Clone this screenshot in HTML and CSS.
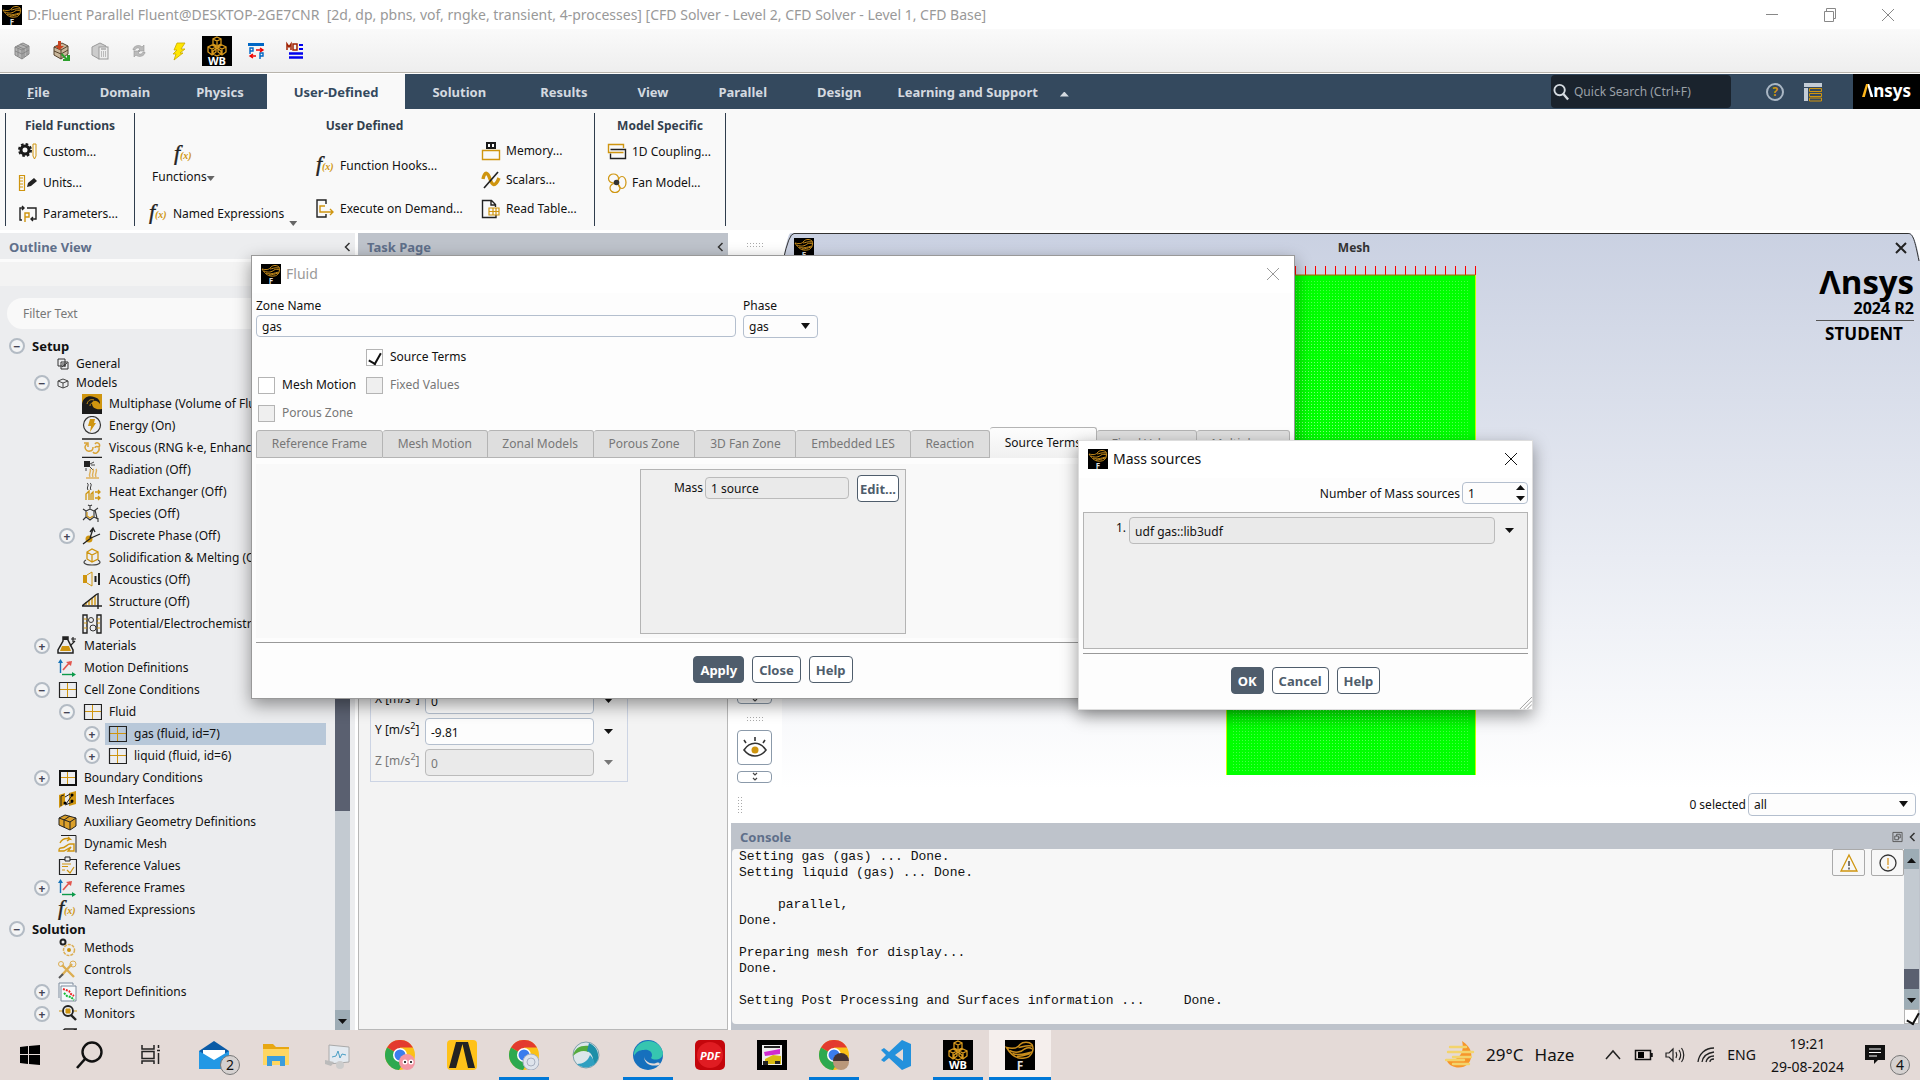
FILE: index.html
```html
<!DOCTYPE html>
<html lang="en">
<head>
  <meta charset="UTF-8">
  <meta name="viewport" content="width=device-width, initial-scale=1.0">
  <title>Fluent Parallel</title>
  <link rel="stylesheet" href="styles.css">
</head>
<body>
  <!-- Icon sprite -->
  <svg class="sprite" aria-hidden="true">
    <symbol id="fluent" viewBox="0 0 20 20">
      <rect width="20" height="20" fill="#000"/>
      <g fill="none" stroke="#c98d1b" stroke-width="1">
        <path d="M1 5c4 1 7 1 9-2 2-2 6-2 8 0 2 4-1 9-5 9-5 1-9-2-12-7z"/>
        <path d="M3 7c4 2 8 1 10-1 2-1 4-1 5 0M5 9c4 2 8 0 13-1M8 11c3 0 6-1 9-2M9 5c2 0 5-2 9-1"/>
      </g>
      <text x="10" y="20" text-anchor="middle" class="mark">F</text>
    </symbol>
    <symbol id="wb" viewBox="0 0 30 30">
      <rect width="30" height="30" fill="#000"/>
      <g fill="none" stroke="#d99a1c" stroke-width="1.3">
        <path d="M15 1l4 2v5l-4 2-4-2V3zM10 9l4 2v5l-4 3-4-3v-5zM20 9l4 2v5l-4 3-4-3v-5zM15 12l4 3v3l-4 2-4-2v-3zM11 3l4 2 4-2M6 11l4 2 4-2M16 11l4 2 4-2M15 5v4M10 13v5M20 13v5"/>
      </g>
      <text x="15" y="29" text-anchor="middle" class="mark mark-wb">WB</text>
    </symbol>
    <symbol id="cube" viewBox="0 0 20 20">
      <path d="M3 6l8-4 6 3v8l-7 5-7-4z" fill="#b4b4b4" stroke="#888"/>
      <path d="M3 6l7 3 7-4M10 9v9M5 5l7 3v8M8 3l7 3v8M3 10l7 3 7-4M6 7v8" fill="none" stroke="#888"/>
    </symbol>
    <symbol id="cube-in" viewBox="0 0 20 20">
      <path d="M3 6l8-4 6 3v8l-7 5-7-4z" fill="#c9b79b" stroke="#54422d"/>
      <path d="M3 6l7 3 7-4M10 9v9M3 10l7 3 7-4" fill="none" stroke="#54422d"/>
      <path d="M7 0v5H4l4.500 4L13 5h-3V0z" fill="#c8431f"/>
      <path d="M11 12l5 5v-3h3v6h-7v-2h2l-4-4z" fill="#2ca02c"/>
    </symbol>
    <symbol id="cube-calc" viewBox="0 0 20 20">
      <path d="M2 6l8-4 6 3v8l-7 5-7-4z" fill="#ccc" stroke="#999"/>
      <rect x="9" y="6" width="9" height="12" fill="#eee" stroke="#999"/>
      <path d="M11 8h5M11 11h1m1 0h1m1 0h1M11 13h1m1 0h1m1 0h1M11 15h1m1 0h1m1 0h1" stroke="#888"/>
    </symbol>
    <symbol id="sync" viewBox="0 0 20 20">
      <path d="M4 9c0-4 6-6 9-3l2-2v6H9l2-2c-2-2-4-1-5 1zM16 11c0 4-6 6-9 3l-2 2v-6h6l-2 2c2 2 4 1 5-1z" fill="#bbb" stroke="#999" stroke-width=".6"/>
    </symbol>
    <symbol id="bolt" viewBox="0 0 20 20">
      <path d="M9 2h8l-4 6h4l-5 4h3l-9 7 2-6H5l4-4H6z" fill="#ffe600" stroke="#c8a800" stroke-width=".8"/>
    </symbol>
    <symbol id="pp" viewBox="0 0 20 20">
      <path d="M2 2h16v3H2z" fill="#0067c5"/>
      <path d="M4 13V7h3v3H4M14 18v-6h3v3h-3" fill="none" stroke="#0067c5" stroke-width="1.400"/>
      <path d="M10 9h7m-3-2l3 2-3 2M10 15H4m3-2l-3 2 3 2" fill="none" stroke="#e00" stroke-width="1.400"/>
    </symbol>
    <symbol id="mo" viewBox="0 0 20 20">
      <path d="M2 9V3l2 3 2-3v6M8 3h4v6H8z" fill="none" stroke="#a02000" stroke-width="1.500"/>
      <path d="M14 4h4M14 8h4" stroke="#00e" stroke-width="2"/>
      <path d="M4 12.500h14M4 16.500h14" stroke="#00e" stroke-width="2.400"/>
    </symbol>
    <symbol id="custom" viewBox="0 0 20 20">
      <circle cx="7" cy="8" r="4" fill="none" stroke="#1a1a1a" stroke-width="3"/>
      <circle cx="7" cy="8" r="6" fill="none" stroke="#1a1a1a" stroke-width="2" stroke-dasharray="2.600 2.100"/>
      <path d="M15 2h3v12l-1.500 3-1.500-3z" fill="none" stroke="#cf950f"/>
    </symbol>
    <symbol id="units" viewBox="0 0 20 20">
      <path d="M1.500 2.500h5v15h-5zM2 5h3M2 8h3M2 11h3M2 14h3" fill="none" stroke="#cf950f" stroke-width="1.200"/>
      <path d="M9 14l1-4 6-5 3 3-6 5z" fill="#222"/>
    </symbol>
    <symbol id="params" viewBox="0 0 20 20">
      <path d="M6 4H2v12h2M9 4h9v11h-5M4 2l2 2-2 2M15 13l-2 2 2 2" fill="none" stroke="#222" stroke-width="1.400"/>
      <path d="M7 18V9h4v4H7" fill="none" stroke="#cf950f" stroke-width="1.400"/>
    </symbol>
    <symbol id="fx" viewBox="0 0 20 20">
      <text x="1" y="15" class="fx-f">f</text>
      <text x="7" y="14" class="fx-x">(x)</text>
    </symbol>
    <symbol id="exec" viewBox="0 0 20 20">
      <path d="M11 5V1H2v17h9v-3" fill="none" stroke="#222" stroke-width="1.400"/>
      <path d="M10 7H5v6h13m-3-3l3 3-3 3" fill="none" stroke="#cf950f" stroke-width="1.400"/>
    </symbol>
    <symbol id="memory" viewBox="0 0 20 20">
      <path d="M5 1h10v7H5z" fill="#1a1a1a"/><path d="M7 3h2v3H7zM11 3h2v3h-2z" fill="#fff"/>
      <path d="M1.500 9.500h17v9h-17z" fill="none" stroke="#cf950f" stroke-width="1.400"/>
    </symbol>
    <symbol id="scalars" viewBox="0 0 20 20">
      <path d="M2 9c2-9 5-6 7 0s5 9 9-1" fill="none" stroke="#cf950f" stroke-width="3.400"/>
      <path d="M17 2L3 18" stroke="#222" stroke-width="1.600"/>
    </symbol>
    <symbol id="table" viewBox="0 0 20 20">
      <path d="M15 16v2.500H1.500v-17h9l4 4V8M10 2v4h4" fill="none" stroke="#222" stroke-width="1.400"/>
      <path d="M8 9h10v7H8zM8 12.500h10M12 9v7M15 9v7" fill="#f9f9f9" stroke="#cf950f" stroke-width="1.200"/>
    </symbol>
    <symbol id="coupling" viewBox="0 0 20 20">
      <path d="M3.500 7.500h15v9h-15v-5" fill="none" stroke="#222" stroke-width="1.400"/>
      <path d="M16.500 6V2.500h-15v8h15" fill="none" stroke="#cf950f" stroke-width="1.400"/>
    </symbol>
    <symbol id="fan" viewBox="0 0 20 20">
      <g fill="none" stroke="#cf950f" stroke-width="1.200"><ellipse cx="6.500" cy="5.500" rx="5" ry="4.500"/><ellipse cx="15" cy="9.500" rx="4" ry="6"/><ellipse cx="8" cy="15" rx="5" ry="4.500"/></g>
      <circle cx="9.500" cy="9.500" r="2.800" fill="#333"/>
    </symbol>
    <symbol id="general" viewBox="0 0 12 12">
      <path d="M1 1h7v7H1zM4 4h7v7H4zM5 9l5-4M5 6h3v3" fill="none" stroke="#333"/>
    </symbol>
    <symbol id="models" viewBox="0 0 12 12">
      <path d="M1 4l5-2 5 2v5l-5 2-5-2zM1 4l5 2 5-2M6 6v5" fill="none" stroke="#444"/>
    </symbol>
    <symbol id="multiphase" viewBox="0 0 20 20">
      <rect width="20" height="20" fill="#cf950f"/>
      <path d="M0 20V10C1 3 7 1 12 3c4 1 6 3 6 7-3-4-7-4-8-1 0 5 4 7 10 6v5z" fill="#1a1a1a"/>
      <path d="M5 10c1-4 4-5 7-4M8 12c0-2 1-3 3-3" fill="none" stroke="#cf950f"/>
    </symbol>
    <symbol id="energy" viewBox="0 0 20 20">
      <circle cx="10" cy="9" r="8.500" fill="none" stroke="#333" stroke-width="1.200"/>
      <path d="M8 3h5l-1 4h2l-6 9 1-6H6z" fill="#cf950f"/>
    </symbol>
    <symbol id="viscous" viewBox="0 0 20 20">
      <path d="M0 1h20M0 19.500h20" stroke="#222" stroke-width="1.400"/>
      <path d="M5 6c-4 3-1 8 3 7 2 0 3-2 3-4M2 5h4v4M13 6c2-3 6 0 4 3-3-1-4 0-4 1m4 0c1 4-4 7-6 4" fill="none" stroke="#d9a336" stroke-width="1.500"/>
    </symbol>
    <symbol id="radiation" viewBox="0 0 20 20">
      <path d="M2 1h6v6H2z" fill="#222"/><path d="M8 4l4-2M8 7l3 3M4 8v3M9 5h4" stroke="#444"/>
      <path d="M8 9c2 3-2 4 0 8M11 9c2 3-2 4 0 8M14 9c2 3-2 4 0 8M4 18h13" fill="none" stroke="#dfb15c" stroke-width="1.500"/>
    </symbol>
    <symbol id="heat" viewBox="0 0 20 20">
      <path d="M5 1c3 2-1 4 1 7M8 1c3 2-1 4 1 7" fill="none" stroke="#333"/>
      <path d="M4 18v-6l3-3v9M9 18v-6l2-2v8M13 10h5m-2-2l2 2-2 2M13 16h5m-2-2l2 2-2 2" fill="none" stroke="#cf950f" stroke-width="1.300"/>
    </symbol>
    <symbol id="species" viewBox="0 0 20 20">
      <path d="M4 7l4-2 4 2v6l-4 3-4-3zM8 5V2M6 1l2 1 2-1M4 7L1 5M12 7l4-3M4 13l-3 3M12 13l4 2M16 14v4M13 6l2 8" fill="none" stroke="#333" stroke-width="1.100"/>
      <path d="M5 8v4l3 2 3-2" fill="none" stroke="#cf950f" stroke-width="1.200"/>
    </symbol>
    <symbol id="discrete" viewBox="0 0 20 20">
      <circle cx="7" cy="13" r="3.500" fill="#cf950f"/>
      <path d="M1 18l8-6 9-4M8 12l3-9M8 6l3-4 2 4" fill="none" stroke="#222" stroke-width="1.300"/>
    </symbol>
    <symbol id="solid" viewBox="0 0 20 20">
      <path d="M5 4l5-3 6 3v7l-6 3-5-3zM5 4l5 3 6-3M10 7v7" fill="none" stroke="#cf950f" stroke-width="1.300"/>
      <path d="M4 12c-4 2-2 5 6 5s10-3 6-5" fill="none" stroke="#444" stroke-width="1.200"/>
    </symbol>
    <symbol id="acoustics" viewBox="0 0 20 20">
      <path d="M1 5h4v8H1z" fill="#cf950f"/><path d="M5 5l5-3v14l-5-3" fill="none" stroke="#cf950f"/>
      <path d="M13.500 6v6M17 3v12" stroke="#222" stroke-width="2"/>
    </symbol>
    <symbol id="structure" viewBox="0 0 20 20">
      <path d="M4 13v-3M7 13V8M10 13V6M13 13V3" stroke="#cf950f" stroke-width="1.400"/>
      <path d="M0 14h20M0 14L15 2M16 1v16" fill="none" stroke="#222" stroke-width="1.400"/>
    </symbol>
    <symbol id="potential" viewBox="0 0 20 20">
      <path d="M1 1h4v18H1zM15 1h4v18h-4z" fill="none" stroke="#222" stroke-width="1.400"/>
      <path d="M2 5h3M2 9h3M2 14h3M15 5h3M15 9h3M15 14h3" stroke="#cf950f"/>
      <circle cx="9" cy="6" r="2.500" fill="none" stroke="#333"/><circle cx="11" cy="14" r="3" fill="none" stroke="#333"/>
    </symbol>
    <symbol id="materials" viewBox="0 0 20 20">
      <path d="M6 1h5v3l5 10v3H1v-3L6 5z" fill="none" stroke="#222" stroke-width="1.500"/>
      <path d="M5 10h7l2 5H3z" fill="#cf950f"/><path d="M6 1h5v3H6z" fill="#222"/>
      <path d="M13 10l5-5M16 1v5M14 3h5" stroke="#222" stroke-width="1.200"/>
    </symbol>
    <symbol id="axes" viewBox="0 0 20 20">
      <path d="M3.500 15V3" stroke="#1473b8" stroke-width="1.400"/><path d="M1 5l2.500-4L6 5z" fill="#1473b8"/>
      <path d="M6 12l7-8" stroke="#e2554d" stroke-width="1.600"/><path d="M9 4l6-1-1 5z" fill="#e2554d"/>
      <path d="M5 16.500h11" stroke="#0c9a4a" stroke-width="1.400"/><path d="M15 14l4 2.500-4 2.500z" fill="#0c9a4a"/>
    </symbol>
    <symbol id="zone" viewBox="0 0 20 20">
      <path d="M10.500 2v15M2 9.500h17" stroke="#cf950f"/>
      <path d="M2.500 2.500h17v15h-17z" fill="none" stroke="#222" stroke-width="1.200"/>
    </symbol>
    <symbol id="boundary" viewBox="0 0 20 20">
      <path d="M10.500 2v15M2 9.500h17" stroke="#cf950f"/>
      <path d="M3 3h16v14H3z" fill="none" stroke="#111" stroke-width="2"/>
    </symbol>
    <symbol id="interfaces" viewBox="0 0 20 20">
      <path d="M2 5l6-2v11l-6 4zM12 3l7-2v13l-7 2z" fill="#cf950f"/>
      <path d="M4 16V6l3-1M9 14l7-10M8 7l5-3M8 15l8-3" stroke="#222" fill="none"/>
      <circle cx="15" cy="5" r="1.500"/><circle cx="15" cy="11" r="1.500"/><circle cx="8" cy="13" r="1.500"/>
    </symbol>
    <symbol id="aux" viewBox="0 0 20 20">
      <path d="M2 6l6-3 11 3v8l-6 4-11-5z" fill="#dba02a" stroke="#222"/>
      <path d="M2 6l11 4 6-4M13 10v8M7 8l6-4M7 8v7" fill="none" stroke="#222"/>
    </symbol>
    <symbol id="dynamic" viewBox="0 0 20 20">
      <path d="M4 1.500h15v17" fill="none" stroke="#222"/>
      <path d="M3 9c2-4 6-5 10-4l-2-2m2 2l-3 2M2 17c0-2 0-3 2-3 5 0 6-4 9-4h4v7h-6l3-4-7 4z" fill="none" stroke="#cf950f" stroke-width="1.400"/>
    </symbol>
    <symbol id="values" viewBox="0 0 20 20">
      <path d="M2.500 3.500h17v15h-17z" fill="none" stroke="#222" stroke-width="1.200"/><path d="M8 1h5v4H8z" fill="#ecedef" stroke="#222"/>
      <path d="M5 8h9M5 10.500h6M5 14h3M10 14l3 3 4-6" fill="none" stroke="#cf950f" stroke-width="1.200"/>
    </symbol>
    <symbol id="methods" viewBox="0 0 20 20">
      <circle cx="6" cy="4" r="2.500" fill="none" stroke="#222" stroke-width="2"/>
      <circle cx="12" cy="12" r="5.500" fill="none" stroke="#dcae53" stroke-width="1.500" stroke-dasharray="3 1"/><circle cx="12" cy="12" r="2" fill="#cf950f"/>
    </symbol>
    <symbol id="controls" viewBox="0 0 20 20">
      <path d="M5 5l12 12M15 4L5 15" stroke="#dcae53" stroke-width="2.400"/>
      <circle cx="4" cy="4" r="2.500" fill="none" stroke="#dcae53"/><circle cx="16" cy="4" r="3" fill="none" stroke="#dcae53"/><path d="M2 18l4-4" stroke="#555" stroke-width="2"/>
    </symbol>
    <symbol id="report" viewBox="0 0 20 20">
      <path d="M2 16V1h14v2M4 4h15v15H4z" fill="#f5f8fb" stroke="#7d8b9c"/>
      <path d="M6 7l3 1 3 1 2 3 3 2" fill="none" stroke="#e22" stroke-width="2" stroke-dasharray="2 1"/>
      <path d="M7 11l3 3 4 1 3 3" fill="none" stroke="#1b3" stroke-width="2" stroke-dasharray="2 1"/>
    </symbol>
    <symbol id="monitors" viewBox="0 0 20 20">
      <circle cx="11" cy="7" r="5" fill="none" stroke="#222" stroke-width="1.800"/><path d="M14 11l5 5" stroke="#222" stroke-width="2.400"/>
      <path d="M2 7h3M17 7h3M9 5h4v4H9z" fill="#cf950f" stroke="#cf950f"/>
    </symbol>
    <symbol id="box3d" viewBox="0 0 20 20">
      <path d="M3 7l5-4h11l-5 4zM3 7v10h11V7M14 17l5-4V3" fill="#ecedef" stroke="#222" stroke-width="1.500"/>
    </symbol>
    <symbol id="close" viewBox="0 0 14 14"><path d="M1 1l12 12M13 1L1 13" stroke="currentColor" fill="none"/></symbol>
    <symbol id="back" viewBox="0 0 8 12"><path d="M6 2L2 6l4 4" stroke="#333" stroke-width="1.500" fill="none"/></symbol>
    <symbol id="chev2" viewBox="0 0 10 10"><path d="M3 1l2 2 2-2M3 6l2 2 2-2" stroke="#444" stroke-width="1.200" fill="none"/></symbol>
    <symbol id="chrome" viewBox="0 0 30 30">
      <circle cx="15" cy="15" r="15" fill="#fbc116"/>
      <path d="M15 15L2 7.500A15 15 0 0 1 28 7.500H15z" fill="#e33b2e"/>
      <path d="M15 15L2 7.500A15 15 0 0 0 14 30l7-12z" fill="#2da94f"/>
      <circle cx="15" cy="15" r="7" fill="#fff"/><circle cx="15" cy="15" r="5.500" fill="#3b7ded"/>
    </symbol>
  </svg>

  <header class="titlebar">
    <svg class="app-icon"><use href="#fluent"/></svg>
    <h1 class="window-title">D:Fluent Parallel Fluent@DESKTOP-2GE7CNR&nbsp; [2d, dp, pbns, vof, rngke, transient, 4-processes] [CFD Solver - Level 2, CFD Solver - Level 1, CFD Base]</h1>
    <div class="window-buttons">
      <button aria-label="Minimize"><svg viewBox="0 0 14 14"><path d="M1 6.500h12" stroke="#888"/></svg></button>
      <button aria-label="Restore"><svg viewBox="0 0 14 14"><path d="M1.500 3.500h9v10h-9zM3.500 3V.500h9v10H11" fill="none" stroke="#888"/></svg></button>
      <button aria-label="Close"><svg><use href="#close"/></svg></button>
    </div>
  </header>

  <div class="toolbar">
    <button aria-label="Mesh"><svg><use href="#cube"/></svg></button>
    <button aria-label="Import mesh"><svg><use href="#cube-in"/></svg></button>
    <button aria-label="Setup"><svg><use href="#cube-calc"/></svg></button>
    <button aria-label="Refresh"><svg><use href="#sync"/></svg></button>
    <button aria-label="Update"><svg><use href="#bolt"/></svg></button>
    <button class="wide" aria-label="Workbench"><svg><use href="#wb"/></svg></button>
    <button aria-label="Parameters"><svg><use href="#pp"/></svg></button>
    <button aria-label="Monitor"><svg><use href="#mo"/></svg></button>
  </div>

  <nav class="menubar">
    <a href="#"><u>F</u>ile</a>
    <a href="#" class="narrow">Domain</a>
    <a href="#" class="narrow">Physics</a>
    <a href="#" class="active">User-Defined</a>
    <a href="#">Solution</a>
    <a href="#">Results</a>
    <a href="#" class="narrow">View</a>
    <a href="#">Parallel</a>
    <a href="#" class="narrow">Design</a>
    <a href="#" class="learn">Learning and Support</a>
    <button class="collapse" aria-label="Collapse ribbon"><i class="caret up"></i></button>
    <label class="search">
      <svg viewBox="0 0 18 18"><circle cx="7" cy="7" r="5.500" fill="none" stroke="#d5dbe1" stroke-width="2"/><path d="M11 11l5 6" stroke="#d5dbe1" stroke-width="2.500"/></svg>
      <input type="text" placeholder="Quick Search (Ctrl+F)" aria-label="Quick Search">
    </label>
    <button class="nav-icon help" aria-label="Help">?</button>
    <button class="nav-icon" aria-label="Arrange layout"><svg viewBox="0 0 18 20"><path d="M0 1h18v4H0zM0 6h4v13H0z" fill="#c3ccd6"/><path d="M5.500 6.500h12v3h-12zM5.500 11.500h12v3h-12zM5.500 16h12v3h-12z" fill="none" stroke="#cf950f"/></svg></button>
    <div class="brand"><span class="brand-a">Λ</span>nsys</div>
  </nav>

  <section class="ribbon">
    <div class="group g-field">
      <h2>Field Functions</h2>
      <div class="col loose">
        <button><svg><use href="#custom"/></svg>Custom...</button>
        <button><svg><use href="#units"/></svg>Units...</button>
        <button><svg><use href="#params"/></svg>Parameters...</button>
      </div>
    </div>
    <div class="group g-user">
      <h2>User Defined</h2>
      <div class="cols">
        <div class="col first">
          <button class="stacked"><svg><use href="#fx"/></svg><span>Functions<i class="caret"></i></span></button>
          <button><svg><use href="#fx"/></svg>Named Expressions<i class="caret low"></i></button>
        </div>
        <div class="col second">
          <button><svg><use href="#fx"/></svg>Function Hooks...</button>
          <button><svg><use href="#exec"/></svg>Execute on Demand...</button>
        </div>
        <div class="col">
          <button><svg><use href="#memory"/></svg>Memory...</button>
          <button><svg><use href="#scalars"/></svg>Scalars...</button>
          <button><svg><use href="#table"/></svg>Read Table...</button>
        </div>
      </div>
    </div>
    <div class="group g-model">
      <h2>Model Specific</h2>
      <div class="col loose">
        <button><svg><use href="#coupling"/></svg>1D Coupling...</button>
        <button><svg><use href="#fan"/></svg>Fan Model...</button>
      </div>
    </div>
  </section>

  <main class="workspace">
    <aside class="outline">
      <header class="panel-head light"><h2>Outline View</h2><button aria-label="Collapse"><svg><use href="#back"/></svg></button></header>
      <div class="outline-tools"></div>
      <div class="outline-body">
        <div class="tree-wrap">
          <input class="filter" type="text" placeholder="Filter Text" aria-label="Filter Text">
          <ul class="tree">
            <li class="root"><button class="exp">−</button><span class="item">Setup</span></li>
            <li class="l1 small first"><span class="item"><svg><use href="#general"/></svg>General</span></li>
            <li class="l1 small"><button class="exp">−</button><span class="item"><svg><use href="#models"/></svg>Models</span></li>
            <li class="l2"><span class="item"><svg><use href="#multiphase"/></svg>Multiphase (Volume of Fluid)</span></li>
            <li class="l2"><span class="item"><svg><use href="#energy"/></svg>Energy (On)</span></li>
            <li class="l2"><span class="item"><svg><use href="#viscous"/></svg>Viscous (RNG k-e, Enhanced Wall Fn)</span></li>
            <li class="l2"><span class="item"><svg><use href="#radiation"/></svg>Radiation (Off)</span></li>
            <li class="l2"><span class="item"><svg><use href="#heat"/></svg>Heat Exchanger (Off)</span></li>
            <li class="l2"><span class="item"><svg><use href="#species"/></svg>Species (Off)</span></li>
            <li class="l2"><button class="exp">+</button><span class="item"><svg><use href="#discrete"/></svg>Discrete Phase (Off)</span></li>
            <li class="l2"><span class="item"><svg><use href="#solid"/></svg>Solidification &amp; Melting (Off)</span></li>
            <li class="l2"><span class="item"><svg><use href="#acoustics"/></svg>Acoustics (Off)</span></li>
            <li class="l2"><span class="item"><svg><use href="#structure"/></svg>Structure (Off)</span></li>
            <li class="l2"><span class="item"><svg><use href="#potential"/></svg>Potential/Electrochemistry (Off)</span></li>
            <li class="l1"><button class="exp">+</button><span class="item"><svg><use href="#materials"/></svg>Materials</span></li>
            <li class="l1"><span class="item"><svg><use href="#axes"/></svg>Motion Definitions</span></li>
            <li class="l1"><button class="exp">−</button><span class="item"><svg><use href="#zone"/></svg>Cell Zone Conditions</span></li>
            <li class="l2"><button class="exp">−</button><span class="item"><svg><use href="#zone"/></svg>Fluid</span></li>
            <li class="l3"><button class="exp">+</button><span class="item selected"><svg><use href="#zone"/></svg>gas (fluid, id=7)</span></li>
            <li class="l3"><button class="exp">+</button><span class="item"><svg><use href="#zone"/></svg>liquid (fluid, id=6)</span></li>
            <li class="l1"><button class="exp">+</button><span class="item"><svg><use href="#boundary"/></svg>Boundary Conditions</span></li>
            <li class="l1"><span class="item"><svg><use href="#interfaces"/></svg>Mesh Interfaces</span></li>
            <li class="l1"><span class="item"><svg><use href="#aux"/></svg>Auxiliary Geometry Definitions</span></li>
            <li class="l1"><span class="item"><svg><use href="#dynamic"/></svg>Dynamic Mesh</span></li>
            <li class="l1"><span class="item"><svg><use href="#values"/></svg>Reference Values</span></li>
            <li class="l1"><button class="exp">+</button><span class="item"><svg><use href="#axes"/></svg>Reference Frames</span></li>
            <li class="l1"><span class="item"><svg><use href="#fx"/></svg>Named Expressions</span></li>
            <li class="root second"><button class="exp">−</button><span class="item">Solution</span></li>
            <li class="l1"><span class="item"><svg><use href="#methods"/></svg>Methods</span></li>
            <li class="l1"><span class="item"><svg><use href="#controls"/></svg>Controls</span></li>
            <li class="l1"><button class="exp">+</button><span class="item"><svg><use href="#report"/></svg>Report Definitions</span></li>
            <li class="l1"><button class="exp">+</button><span class="item"><svg><use href="#monitors"/></svg>Monitors</span></li>
            <li class="l1"><span class="item"><svg><use href="#box3d"/></svg></span></li>
          </ul>
        </div>
        <div class="scrollbar">
          <div class="thumb outline-thumb"></div>
          <button class="end" aria-label="Scroll down"><i class="caret"></i></button>
        </div>
      </div>
    </aside>

    <section class="task">
      <header class="panel-head"><h2>Task Page</h2><button aria-label="Collapse"><svg><use href="#back"/></svg></button></header>
      <div class="task-body">
        <div class="gravity">
          <div class="field"><label for="gx">X [m/s<sup>2</sup>]</label><input id="gx" type="text" value="0"><i class="caret"></i></div>
          <div class="field"><label for="gy">Y [m/s<sup>2</sup>]</label><input id="gy" type="text" value="-9.81"><i class="caret"></i></div>
          <div class="field off"><label for="gz">Z [m/s<sup>2</sup>]</label><input id="gz" type="text" value="0" disabled><i class="caret"></i></div>
        </div>
      </div>
    </section>

    <section class="right">
      <div class="graphics">
        <div class="side-tools">
          <div class="side-group"><i class="grip"></i><button class="tool" aria-label="Pointer"></button></div>
          <div class="side-group">
            <button class="more" aria-label="More"><svg><use href="#chev2"/></svg></button>
            <i class="grip"></i>
            <button class="tool" aria-label="Visibility">
              <svg viewBox="0 0 26 26"><path d="M2 15c6-9 16-9 22 0-6 8-16 8-22 0z" fill="none" stroke="#333" stroke-width="1.600"/><circle cx="13" cy="15" r="3.500" fill="#cf950f"/><path d="M2 5l2 3M13 2v4M23 5l-2 3" stroke="#333" stroke-width="1.600"/></svg>
            </button>
            <button class="more" aria-label="More"><svg><use href="#chev2"/></svg></button>
          </div>
        </div>
        <div class="viewport">
          <div class="view-tab">
            <svg class="edge" viewBox="0 0 12 28"><path d="M0 0h9c-2 0-3 3-8 26v2H0z" fill="#fff"/><path d="M1 28Q7 0 12 .500" fill="none" stroke="#333"/></svg>
            <div class="view-bar">
              <svg class="app-icon"><use href="#fluent"/></svg>
              <h2>Mesh</h2>
              <button aria-label="Close tab"><svg viewBox="0 0 14 14"><path d="M2 2l10 10M12 2L2 12" stroke="#222" stroke-width="2"/></svg></button>
            </div>
            <svg class="edge" viewBox="0 0 12 28"><path d="M0 0h12v28C8 6 5 0 0 0z" fill="#fff"/><path d="M0 .500C5 0 7 8 11 28" fill="none" stroke="#333"/></svg>
          </div>
          <svg class="mesh" viewBox="0 0 250 510">
            <defs>
              <pattern id="fine" width="3" height="3" patternUnits="userSpaceOnUse"><path d="M1 1h1v1H1z" fill="#8cff8c"/></pattern>
              <pattern id="ticks" x="9" width="10" height="9" patternUnits="userSpaceOnUse"><path d="M.500 0v9" stroke="#f00"/></pattern>
              <radialGradient id="fade"><stop offset="0" stop-color="#fff"/><stop offset=".7" stop-color="#aaa"/><stop offset="1" stop-color="#000"/></radialGradient>
              <mask id="patch">
                <rect width="250" height="510" fill="url(#fade)"/>
                <g fill="none" stroke="#000" stroke-width="7">
                  <path d="M20 62C90 30 180 50 236 110M20 100C90 78 170 90 230 150M60 30C130 20 190 30 240 70M10 490C80 440 180 470 240 490"/>
                </g>
              </mask>
            </defs>
            <rect y="1" width="250" height="9" fill="url(#ticks)"/>
            <rect y="10" width="250" height="500" fill="#0f0"/>
            <rect x="6" y="14" width="238" height="492" fill="url(#fine)"/>
            <rect x="6" y="14" width="238" height="492" fill="#0f0" opacity=".5"/>
            <rect x="6" y="14" width="238" height="492" fill="url(#fine)" mask="url(#patch)"/>
            <path d="M0 10h250" stroke="#b06000" stroke-width="1"/>
            <path d="M.500 10v500M249.500 10v500" stroke="#c8ff00"/>
          </svg>
          <div class="student-logo">
            <strong>Λnsys</strong>
            <b>2024 R2</b>
            <em>STUDENT</em>
          </div>
        </div>
      </div>
      <div class="select-bar">
        <i class="grip tall"></i>
        <label for="surfaces">0 selected</label>
        <div class="select all"><select id="surfaces"><option>all</option></select></div>
      </div>
      <section class="console">
        <header class="panel-head">
          <h2>Console</h2>
          <button aria-label="Float"><svg viewBox="0 0 12 12"><path d="M1 1h10v10H1zM3 5h4v4H3zM5 5V3h4v4H7" fill="none" stroke="#555"/></svg></button>
          <button aria-label="Collapse"><svg><use href="#back"/></svg></button>
        </header>
        <div class="console-body">
          <pre>Setting gas (gas) ... Done.
Setting liquid (gas) ... Done.

     parallel,
Done.

Preparing mesh for display...
Done.

Setting Post Processing and Surfaces information ...     Done.</pre>
          <div class="console-buttons">
            <button aria-label="Warnings"><svg viewBox="0 0 20 20"><path d="M10 2l8 16H2z" fill="none" stroke="#cf950f" stroke-width="1.300"/><path d="M10 8v5M10 14.500v2" stroke="#777" stroke-width="2"/></svg></button>
            <button aria-label="Errors"><svg viewBox="0 0 20 20"><circle cx="10" cy="10" r="8" fill="none" stroke="#333" stroke-width="1.300"/><path d="M10 5v7M10 13.500v2" stroke="#dfa94a" stroke-width="1.600"/></svg></button>
          </div>
          <div class="console-side">
            <div class="scrollbar">
              <button class="end" aria-label="Scroll up"><i class="caret up"></i></button>
              <div class="track"></div>
              <div class="thumb"></div>
              <button class="end" aria-label="Scroll down"><i class="caret"></i></button>
            </div>
            <input class="check" type="checkbox" checked aria-label="Auto scroll">
          </div>
        </div>
      </section>
    </section>
  </main>

  <footer class="taskbar">
    <button class="start" aria-label="Start"><svg viewBox="0 0 30 30"><path d="M5 7l8-1v8H5zM14 6l11-1v9H14zM5 15h8v9l-8-1zM14 15h11v10l-11-1z"/></svg></button>
    <button aria-label="Search"><svg viewBox="0 0 30 30"><circle cx="17" cy="12" r="9.500" fill="none" stroke="#111" stroke-width="2.400"/><path d="M10 19l-8 9" stroke="#111" stroke-width="2.600"/></svg></button>
    <button aria-label="Task view"><svg viewBox="0 0 30 30"><path d="M5 5v4h12V5M5 24v-3h12v3M5 11.500h12v7H5zM21.500 5v3M21.500 13v11M20 10.500h3" fill="none" stroke="#222" stroke-width="1.500"/></svg></button>
    <button aria-label="Mail"><svg viewBox="0 0 30 30"><path d="M0 11L15 1l15 10v18H0z" fill="#0a5ba6"/><path d="M4 10h22v8L15 24 4 18z" fill="#fff"/><path d="M0 11l15 9 15-9v18H0z" fill="#2298e5"/></svg><span class="badge">2</span></button>
    <button aria-label="Explorer"><svg viewBox="0 0 30 30"><path d="M2 4h10l3 3h13v17H2z" fill="#e8a712"/><path d="M2 9h26v16H2z" fill="#ffd661"/><path d="M6 26V16h18v10h-5v-5h-8v5z" fill="#3b9ddc"/></svg></button>
    <button aria-label="Monitor"><svg viewBox="0 0 30 30"><path d="M6 5l20 2v15L6 24z" fill="#e4eaf0" stroke="#aaa"/><path d="M9 17l4-1 2-5 2 7 2-4 4 1" fill="none" stroke="#4a9fc5"/><path d="M2 20l9 2-3 4-6-2z" fill="#bbb"/><circle cx="17" cy="25" r="4" fill="#ccc"/></svg></button>
    <button aria-label="Chrome"><svg viewBox="0 0 30 30"><use href="#chrome"/><circle cx="22" cy="22" r="8" fill="#f497a4"/><circle cx="20" cy="22" r="2.500" fill="#fff"/><circle cx="26" cy="22" r="2.500" fill="#fff"/><circle cx="20" cy="22" r="1"/><circle cx="26" cy="22" r="1"/></svg></button>
    <button aria-label="Ansys"><svg viewBox="0 0 30 30"><rect width="30" height="30" rx="4" fill="#ffc21a"/><path d="M9 2h7L9 28H2zM15 2h6l7 26h-7z" fill="#222"/></svg></button>
    <button class="open" aria-label="Chrome"><svg viewBox="0 0 30 30"><use href="#chrome"/><circle cx="22" cy="22" r="8" fill="#dfe4ec" stroke="#a8b0c0"/><circle cx="22" cy="22" r="4" fill="none" stroke="#a8b0c0"/></svg></button>
    <button aria-label="Browser"><svg viewBox="0 0 30 30"><circle cx="15" cy="15" r="13" fill="#dce6ea" stroke="#7fa0ac"/><path d="M2 16C4 7 10 5 19 6l-2 6c-4-2-10-1-15 4z" fill="#55ab3d"/><path d="M18 3c7 3 10 9 9 16-1 3-3 5-5 6 1-7-1-12-6-14z" fill="#1d8fa8"/><path d="M24 24c-6 5-13 4-18 0 6 0 11-3 13-9 3 3 4 6 5 9z" fill="#2f9fc0"/></svg></button>
    <button class="open" aria-label="Edge"><svg viewBox="0 0 30 30"><circle cx="15" cy="15" r="15" fill="#1670bd"/><path d="M1 13C4-3 27-3 30 13c0 7-9 8-12 5 3-4-1-9-7-8C6 10 3 12 1 16z" fill="#36c5b0"/><path d="M11 16c0 8 7 11 15 9 2-2 0-3-3-2-5 2-12-2-12-7z" fill="#e4dad7"/></svg></button>
    <button aria-label="PDF"><svg viewBox="0 0 30 30"><rect width="30" height="30" rx="5" fill="#c4060c"/><circle cx="15" cy="15" r="13" fill="#e01c22"/><text x="15" y="20" text-anchor="middle" class="pdf">PDF</text></svg></button>
    <button aria-label="Game"><svg viewBox="0 0 30 30"><rect width="30" height="30" fill="#000"/><rect x="5" y="5" width="20" height="20" fill="#eee"/><path d="M7 6h16v2H7z" fill="#222"/><path d="M7 12l16-3v5l-15 2z" fill="#d02ad0"/><path d="M8 19l8-4 8 1v8H8z" fill="#d8bb12"/><path d="M6 21h5v4H6zM18 21h5v3h-5z" fill="#222"/></svg></button>
    <button class="open" aria-label="Chrome"><svg viewBox="0 0 30 30"><use href="#chrome"/><circle cx="22" cy="22" r="8" fill="#b9977a"/><path d="M14 21a8 8 0 0 1 16 0z" fill="#433"/></svg></button>
    <button aria-label="Code"><svg viewBox="0 0 30 30"><path d="M21 0l9 4v22l-9 4L8 18l-5 4-3-2 5-5-5-5 3-2 5 4zM22 9l-8 6 8 6z" fill="#2391dc" fill-rule="evenodd"/></svg></button>
    <button class="open" aria-label="Workbench"><svg><use href="#wb"/></svg></button>
    <button class="open current" aria-label="Fluent"><svg><use href="#fluent"/></svg></button>
    <div class="tray">
      <svg class="weather" viewBox="0 0 30 30"><path d="M17 1c10 6 12 16 6 23-6 6-18 4-21-3 12 0 18-9 15-20z" fill="#f7962a"/><path d="M5 7h16M3 12h25M8 17h18M1 20h18M8 24h16" stroke="#f3d46c" stroke-width="2.400" stroke-linecap="round"/></svg>
      <span class="temp">29°C</span><span class="haze">Haze</span>
      <svg viewBox="0 0 20 20"><path d="M3 14l7-8 7 8" fill="none" stroke="#222" stroke-width="1.500"/></svg>
      <svg viewBox="0 0 20 20"><path d="M1.500 5.500h15v9h-15zM18 8v4" fill="none" stroke="#111" stroke-width="1.500"/><path d="M4 7h6v6H4z"/></svg>
      <svg viewBox="0 0 20 20"><path d="M1 8h3l4-4v12l-4-4H1zM11 7c1 2 1 4 0 6M14 5c2 3 2 7 0 10M16.500 3c3 4 3 10 0 14" fill="none" stroke="#222" stroke-width="1.200"/></svg>
      <svg viewBox="0 0 20 20"><path d="M2 17C3 9 9 3 18 3M6 17c1-6 5-9 12-10M10 17c1-4 4-6 8-6M14 17c0-2 2-3 4-3" fill="none" stroke="#222" stroke-width="1.300"/></svg>
      <span class="lang">ENG</span>
      <time class="clock">19:21<br>29-08-2024</time>
      <button class="notes" aria-label="Notifications"><svg viewBox="0 0 20 20"><path d="M0 0h20v15h-7l-4 4v-4H0z" fill="#111"/><path d="M4 4h12M4 7.500h12M4 11h8" stroke="#fff"/></svg><span class="badge">4</span></button>
    </div>
  </footer>

  <!-- Fluid zone dialog -->
  <div class="dialog fluid" role="dialog" aria-label="Fluid">
    <header class="dialog-title muted"><svg class="app-icon"><use href="#fluent"/></svg><h2>Fluid</h2><button aria-label="Close"><svg><use href="#close"/></svg></button></header>
    <div class="dialog-body">
      <div class="name-row">
        <div class="name"><label for="zone-name">Zone Name</label><input id="zone-name" type="text" value="gas"></div>
        <div class="phase"><label for="phase">Phase</label><div class="select"><select id="phase"><option>gas</option></select></div></div>
      </div>
      <div class="options">
        <label class="opt c2"><input class="check" type="checkbox" checked>Source Terms</label>
        <label class="opt c1"><input class="check" type="checkbox">Mesh Motion</label>
        <label class="opt c2 off"><input class="check" type="checkbox" disabled>Fixed Values</label>
        <label class="opt c1 off"><input class="check" type="checkbox" disabled>Porous Zone</label>
      </div>
      <div class="tabs">
        <button>Reference Frame</button><button>Mesh Motion</button><button>Zonal Models</button><button>Porous Zone</button><button>3D Fan Zone</button><button>Embedded LES</button><button>Reaction</button><button class="on">Source Terms</button><button>Fixed Values</button><button>Multiphase</button>
      </div>
      <div class="tab-panel">
        <div class="sources">
          <label for="mass">Mass</label>
          <input id="mass" type="text" value="1 source" readonly>
          <button class="btn">Edit...</button>
        </div>
      </div>
      <div class="actions"><button class="btn primary">Apply</button><button class="btn">Close</button><button class="btn">Help</button></div>
    </div>
  </div>

  <!-- Mass sources dialog -->
  <div class="dialog mass" role="dialog" aria-label="Mass sources">
    <header class="dialog-title"><svg class="app-icon"><use href="#fluent"/></svg><h2>Mass sources</h2><button aria-label="Close"><svg><use href="#close"/></svg></button></header>
    <div class="dialog-body">
      <div class="count">
        <label for="count">Number of Mass sources</label>
        <div class="spinner"><input id="count" type="text" value="1"><span class="arrows"><i class="caret up"></i><i class="caret"></i></span></div>
      </div>
      <div class="list">
        <label for="src1">1.</label>
        <input id="src1" type="text" value="udf gas::lib3udf" readonly>
        <i class="caret"></i>
      </div>
      <div class="actions"><button class="btn primary">OK</button><button class="btn">Cancel</button><button class="btn">Help</button></div>
    </div>
    <svg class="resize" viewBox="0 0 14 14"><path d="M1 14L14 1M5 14l9-9M9 14l5-5" stroke="#999" fill="none"/></svg>
  </div>
</body>
</html>
```

FILE: styles.css
```css
* {
  box-sizing: border-box;
}

body {
  margin: 0;
  height: 100vh;
  display: flex;
  flex-direction: column;
  overflow: hidden;
  background: #fff;
  font-family: "Noto Sans", "Open Sans", sans-serif;
  font-size: 12px;
  line-height: 16px;
  color: #111;
}

h1, h2, ul, pre {
  margin: 0;
  padding: 0;
  font-size: 12px;
}

ul {
  list-style: none;
}

button, input, select {
  font: inherit;
  color: inherit;
}

button {
  background: none;
  border: 0;
  padding: 0;
}

svg {
  display: block;
  flex: none;
}

.sprite {
  display: none;
}

.app-icon {
  width: 20px;
  height: 20px;
}

/* Text drawn inside icons */
.mark {
  font: bold 8px "Open Sans", sans-serif;
  fill: #ddd;
}

.mark-wb {
  font-size: 11px;
  fill: #fff;
}

.fx-f {
  font: italic 22px "Liberation Serif", serif;
  fill: #222;
  stroke: #222;
  stroke-width: 0.4px;
}

.fx-x {
  font: italic bold 10px "Liberation Serif", serif;
  fill: #cf950f;
}

.pdf {
  font: italic bold 11px "Open Sans", sans-serif;
  fill: #fff;
}

.caret {
  display: inline-block;
  flex: none;
  width: 9px;
  height: 5px;
  background: currentColor;
  clip-path: polygon(0 0, 100% 0, 50% 100%);
}

.caret.up {
  clip-path: polygon(0 100%, 100% 100%, 50% 0);
}

/* Title bar */
.titlebar {
  display: flex;
  align-items: center;
  height: 29px;
  padding-left: 2px;
  gap: 5px;
}

.window-title {
  flex: 1;
  font-size: 14px;
  font-weight: normal;
  color: #999;
  white-space: nowrap;
}

.window-buttons {
  display: flex;
  padding-right: 3px;
}

.window-buttons button {
  width: 58px;
  height: 28px;
  display: flex;
  align-items: center;
  justify-content: center;
  color: #888;
}

.window-buttons svg {
  width: 14px;
  height: 14px;
}

.toolbar {
  display: flex;
  align-items: center;
  gap: 19px;
  height: 44px;
  padding-left: 12px;
  background: linear-gradient(#fafafa, #eee);
  border-bottom: 1px solid #b8b4ac;
  margin-bottom: 1px;
}

.toolbar svg {
  width: 20px;
  height: 20px;
}

.toolbar .wide {
  margin: 0 -5px;
}

.toolbar .wide svg {
  width: 30px;
  height: 30px;
}

/* Menu bar */
.menubar {
  display: flex;
  align-items: center;
  height: 35px;
  flex: none;
  background: #34495e;
  color: #d4dae0;
  font-size: 13px;
  font-weight: bold;
}

.menubar a {
  height: 35px;
  line-height: 36px;
  padding: 0 27px;
  color: inherit;
  text-decoration: none;
  white-space: nowrap;
}

.menubar .narrow {
  padding: 0 23px;
}

.menubar .learn {
  padding: 0 22px 0 13px;
}

.menubar .active {
  background: #f9f9f9;
  color: #34495e;
}

.search {
  display: flex;
  align-items: center;
  gap: 4px;
  width: 180px;
  height: 33px;
  margin-left: auto;
  padding-left: 2px;
  border-radius: 4px;
  background: #1a232d;
  font-size: 12px;
}

.search svg {
  width: 17px;
  height: 18px;
}

.search input {
  flex: 1;
  min-width: 0;
  border: 0;
  padding: 0;
  background: none;
  outline: none;
  font-weight: normal;
}

.search input::placeholder {
  color: #9aa1a8;
}

.nav-icon {
  width: 18px;
  margin-left: 20px;
}

.nav-icon svg {
  width: 18px;
  height: 20px;
}

.nav-icon.help {
  height: 18px;
  margin-left: 35px;
  border: 2px solid #aab7c4;
  border-radius: 50%;
  color: #cf950f;
  font-size: 12px;
  line-height: 14px;
}

.brand {
  width: 67px;
  height: 35px;
  margin-left: 31px;
  background: #000;
  color: #fff;
  font-size: 17px;
  line-height: 34px;
  text-align: center;
}

.brand-a {
  background: linear-gradient(90deg, #ffb71b 52%, #fff 52%);
  background-clip: text;
  -webkit-background-clip: text;
  color: transparent;
}

/* Ribbon */
.ribbon {
  display: flex;
  flex: none;
  height: 121px;
  padding: 4px 0 4px 5px;
  background: #f9f9f9;
  margin-bottom: 3px;
}

.group {
  border-left: 1px solid #2f3d4d;
}

.group:last-child {
  border-right: 1px solid #2f3d4d;
}

.group h2 {
  height: 26px;
  line-height: 25px;
  text-align: center;
  color: #333f4d;
}

.g-field {
  width: 129px;
  padding-left: 12px;
}

.g-field h2,
.g-model h2 {
  margin-left: -12px;
}

.g-user {
  width: 460px;
  padding-left: 13px;
}

.g-user h2 {
  margin-left: -13px;
}

.g-model {
  width: 132px;
  padding-left: 12px;
}

.cols {
  display: flex;
}

.col {
  display: flex;
  flex-direction: column;
  align-items: flex-start;
  gap: 5px;
}

.col.loose {
  gap: 7px;
  padding-top: 1px;
}

.col.first {
  width: 167px;
  gap: 11px;
  padding-top: 6px;
}

.col.second {
  width: 166px;
  gap: 19px;
  padding-top: 15px;
}

.col button {
  display: flex;
  align-items: center;
  gap: 5px;
  height: 24px;
  white-space: nowrap;
}

.col svg {
  width: 20px;
  height: 20px;
}

.col .stacked {
  flex-direction: column;
  gap: 4px;
  height: 46px;
  padding-left: 4px;
}

.col .caret {
  width: 8px;
  color: #666;
}

.col .caret.low {
  align-self: flex-end;
}

/* Panels */
.workspace {
  flex: 1;
  min-height: 0;
  display: flex;
}

.panel-head {
  display: flex;
  align-items: center;
  gap: 4px;
  flex: none;
  height: 26px;
  padding: 1px 2px 0 9px;
  background: #bec3cb;
  color: #5f6f8a;
}

.panel-head.light {
  background: #ecedef;
}

.panel-head h2 {
  flex: 1;
  font-size: 13px;
}

.panel-head svg {
  width: 11px;
  height: 12px;
}

.outline {
  display: flex;
  flex-direction: column;
  width: 355px;
  margin-right: 3px;
  flex: none;
  background: #ecedef;
}

.outline-tools {
  height: 27px;
  border-top: 3px solid #fbfbfb;
  background: #f3f3f3;
}

.outline-body {
  display: flex;
  flex: 1;
  min-height: 0;
  padding-right: 5px;
}

.tree-wrap {
  flex: 1;
  min-width: 0;
  overflow: hidden;
  padding-top: 12px;
}

.filter {
  width: 320px;
  height: 31px;
  margin: 0 0 8px 7px;
  padding: 0 16px;
  border: 0;
  border-radius: 16px;
  background: #f9f9f9;
}

.filter::placeholder {
  color: #777;
}

.tree li {
  display: flex;
  align-items: center;
  height: 22px;
  padding-right: 9px;
  white-space: nowrap;
}

.tree .root {
  height: 18px;
  padding-left: 9px;
  font-size: 13px;
  font-weight: bold;
}

.tree .root.second {
  height: 16px;
}

.tree .l1 { padding-left: 34px; }
.tree .l2 { padding-left: 59px; }
.tree .l3 { padding-left: 84px; }
.tree .small { height: 20px; }
.tree .small.first { height: 18px; }

.item {
  flex: 1;
  min-width: 0;
  display: flex;
  align-items: center;
  gap: 7px;
  height: 22px;
  margin-left: 21px;
  padding-left: 2px;
  overflow: hidden;
}

.exp + .item {
  margin-left: 5px;
}

.item svg {
  width: 20px;
  height: 20px;
}

.small .item svg {
  width: 12px;
  height: 12px;
}

.item.selected {
  background: #b8c8d9;
}

.exp {
  width: 16px;
  height: 16px;
  flex: none;
  border: 2px solid #b3bbc4;
  border-radius: 50%;
  background: #f3f4f5;
  color: #445;
  font-size: 12px;
  font-weight: bold;
  line-height: 11px;
}

.scrollbar {
  display: flex;
  flex-direction: column;
  width: 15px;
  flex: none;
  background: #c3cad1;
}

.thumb {
  height: 20px;
  background: #5a6070;
}

.outline-thumb {
  height: 525px;
  margin-bottom: auto;
}

.end {
  height: 20px;
  background: #9dacb5;
  line-height: 16px;
}

.task {
  display: flex;
  flex-direction: column;
  width: 370px;
  margin-right: 3px;
  flex: none;
}

.task-body {
  flex: 1;
  padding: 422px 0 0 11px;
  border: 1px solid #b8b8b8;
  border-top: 0;
  background: #f3f3f3;
}

.gravity {
  display: flex;
  flex-direction: column;
  gap: 4px;
  width: 258px;
  padding: 5px 4px;
  border: 1px solid #ccd4e4;
}

.field {
  display: flex;
  align-items: center;
}

.field label {
  width: 50px;
  padding-bottom: 4px;
}

.field sup {
  font-size: 9px;
  line-height: 0;
}

.field input {
  width: 169px;
  height: 27px;
  margin-right: 10px;
}

.off {
  color: #777;
}

input[type="text"]:not(.filter):not(.search input) {
  border: 1px solid #b4bfce;
  border-radius: 4px;
  padding: 1px 5px 0;
  background: #fdfdfd;
}

input[type="text"]:not(.filter):not(.search input):disabled,
input[type="text"]:not(.filter):not(.search input):read-only {
  border-color: #bbb;
  background: #eaeaea;
}

/* Graphics window */
.right {
  flex: 1;
  min-width: 0;
  display: flex;
  flex-direction: column;
}

.graphics {
  flex: 1;
  min-height: 0;
  display: flex;
}

.side-tools {
  display: flex;
  flex-direction: column;
  justify-content: space-between;
  width: 51px;
  padding: 3px 10px 6px 6px;
}

.side-group {
  display: flex;
  flex-direction: column;
  align-items: center;
  gap: 6px;
}

.grip {
  width: 18px;
  height: 5px;
  margin: 6px 0 3px;
  background: radial-gradient(#aaa 1px, transparent 1px) 0 0 / 3px 3px;
}

.grip.tall {
  width: 5px;
  height: 17px;
  margin: 0 auto 0 0;
}

.tool {
  width: 35px;
  height: 35px;
  display: flex;
  align-items: center;
  justify-content: center;
  border: 1px solid #8b9aaa;
  border-radius: 4px;
}

.tool svg {
  width: 26px;
  height: 26px;
}

.more {
  display: flex;
  justify-content: center;
  width: 35px;
  height: 12px;
  border: 1px solid #8b9aaa;
  border-radius: 4px;
}

.more svg {
  width: 10px;
  height: 10px;
}

.viewport {
  position: relative;
  flex: 1;
  background: linear-gradient(#cad1e2, #fff);
}

.view-tab {
  display: flex;
  height: 28px;
}

.edge {
  width: 12px;
  height: 28px;
}

.view-bar {
  flex: 1;
  display: flex;
  align-items: center;
  border-top: 1px solid #333;
}

.view-bar h2 {
  flex: 1;
  text-align: center;
  color: #333;
}

.view-bar button svg {
  width: 14px;
  height: 14px;
}

.mesh {
  position: absolute;
  left: 444px;
  top: 32px;
  width: 250px;
  height: 510px;
}

.student-logo {
  position: absolute;
  top: 30px;
  right: 6px;
  width: 98px;
  text-align: right;
  white-space: nowrap;
  font-family: "Open Sans", sans-serif;
  color: #000;
}

.student-logo strong {
  display: block;
  font-size: 33px;
  line-height: 38px;
}

.student-logo b {
  display: block;
  padding-bottom: 4px;
  border-bottom: 1px solid #555;
  font-size: 16px;
  line-height: 15px;
}

.student-logo em {
  display: block;
  padding-right: 2px;
  text-align: center;
  font-style: normal;
  font-weight: bold;
  font-size: 17px;
  line-height: 26px;
}

.select-bar {
  display: flex;
  align-items: center;
  gap: 2px;
  height: 34px;
  padding: 0 4px 3px 6px;
}

.select {
  position: relative;
  width: 75px;
}

.select.all {
  width: 168px;
}

.select select {
  width: 100%;
  height: 23px;
  appearance: none;
  border: 1px solid #b4bfce;
  border-radius: 4px;
  padding: 1px 5px 0;
  background: #fdfdfd;
}

.select::after {
  content: '';
  position: absolute;
  right: 8px;
  top: 8px;
  width: 9px;
  height: 6px;
  background: #111;
  clip-path: polygon(0 0, 100% 0, 50% 100%);
}

.console {
  display: flex;
  flex-direction: column;
  height: 207px;
  background: #bec3cb;
}

.console-body {
  display: flex;
  flex: 1;
  min-height: 0;
  margin: 0 1px 6px 1px;
  border-radius: 4px 0 0 4px;
  background: #f7f7f7;
}

.console-body pre {
  flex: 1;
  padding-left: 7px;
  font-family: "Liberation Mono", monospace;
  font-size: 13px;
  line-height: 16px;
}

.console-buttons {
  display: flex;
  gap: 6px;
}

.console-buttons button {
  display: flex;
  align-items: center;
  justify-content: center;
  width: 33px;
  height: 27px;
  border: 1px solid #aaa;
  border-radius: 2px;
}

.console-buttons svg {
  width: 20px;
  height: 20px;
}

.console-side {
  display: flex;
  flex-direction: column;
  width: 15px;
}

.console-side .scrollbar {
  flex: 1;
}

.console-side .check {
  width: 15px;
  height: 15px;
}

.track {
  flex: 1;
}

/* Check boxes */
.check {
  appearance: none;
  flex: none;
  width: 17px;
  height: 17px;
  margin: 0;
  border: 1px solid #b4b4b4;
  background: #fff;
}

.check:disabled {
  background: #efefef;
}

.check:checked::after {
  content: '';
  display: block;
  width: 6px;
  height: 11px;
  margin: 1px 0 0 4px;
  border: solid #111;
  border-width: 0 2px 2px 0;
  transform: rotate(30deg);
}

/* Task bar */
.taskbar {
  display: flex;
  flex: none;
  height: 50px;
  background: #e4dad7;
  overflow: hidden;
}

.taskbar > button {
  position: relative;
  display: flex;
  align-items: center;
  justify-content: center;
  width: 62px;
  height: 50px;
}

.taskbar > .start {
  width: 59px;
}

.taskbar > button svg {
  width: 30px;
  height: 30px;
}

.open::after {
  content: '';
  position: absolute;
  left: 6px;
  right: 6px;
  bottom: 0;
  height: 3px;
  background: #0078d7;
}

.current {
  background: #f5efed;
}

.current::after {
  left: 0;
  right: 0;
}

.badge {
  position: absolute;
  right: 5px;
  bottom: 5px;
  width: 20px;
  height: 20px;
  border: 1px solid #777;
  border-radius: 50%;
  background: #d5d1d0;
  font-size: 14px;
  line-height: 18px;
  text-align: center;
}

.tray {
  display: flex;
  align-items: center;
  gap: 11px;
  margin-left: auto;
  font-size: 15px;
}

.tray svg {
  width: 20px;
  height: 20px;
}

.tray .weather {
  width: 30px;
  height: 30px;
}

.temp,
.haze {
  font-size: 17px;
}

.haze {
  margin-right: 18px;
}

.lang {
  font-size: 14px;
}

.clock {
  font-size: 14px;
  line-height: 23px;
  text-align: center;
  margin-left: 4px;
}

.notes {
  position: relative;
  width: 50px;
  height: 50px;
  margin: 0 5px 0 10px;
}

/* Dialogs */
.dialog {
  position: absolute;
  display: flex;
  flex-direction: column;
  background: #fdfdfd;
  border: 1px solid #999;
  box-shadow: 0 6px 16px rgba(0, 0, 0, 0.4);
}

.fluid {
  left: 251px;
  top: 255px;
  width: 1044px;
  height: 444px;
}

.mass {
  left: 1078px;
  top: 440px;
  width: 455px;
  height: 270px;
  border-color: #ddd;
}

.dialog-title {
  display: flex;
  align-items: center;
  gap: 5px;
  height: 37px;
  padding: 0 14px 1px 9px;
  background: #fff;
}

.dialog-title h2 {
  flex: 1;
  font-size: 14px;
  font-weight: normal;
}

.dialog-title svg:not(.app-icon) {
  width: 14px;
  height: 14px;
}

.muted {
  color: #999;
}

.dialog-body {
  flex: 1;
  display: flex;
  flex-direction: column;
  padding: 4px;
}

.name-row {
  display: flex;
  gap: 7px;
}

.name {
  width: 480px;
}

.name-row label {
  display: block;
  height: 18px;
  line-height: 17px;
}

.name input {
  width: 100%;
  height: 22px;
}

.options {
  display: grid;
  grid-template-columns: 108px 1fr;
  row-gap: 4px;
  padding: 7px 2px 1px;
}

.c1 { grid-column: 1; }
.c2 { grid-column: 2; }

.opt {
  display: flex;
  align-items: center;
  gap: 7px;
  height: 24px;
}

.tabs {
  display: flex;
  align-items: flex-end;
  height: 32px;
  margin-bottom: 6px;
}

.tabs button {
  flex: 1 1 auto;
  height: 28px;
  border: 1px solid #b4b4b4;
  border-left-width: 0;
  border-radius: 3px 3px 0 0;
  background: #dedede;
  color: #777;
  white-space: nowrap;
}

.tabs button:first-child {
  border-left-width: 1px;
}

.tabs .on {
  height: 31px;
  border-bottom: 0;
  background: linear-gradient(#fdfdfd, #f0f0f0);
  color: #111;
}

.tab-panel {
  flex: 1;
  padding: 5px 0 4px;
  background: #f9f9f9;
}

.sources {
  display: flex;
  align-items: flex-start;
  width: 266px;
  height: 100%;
  margin: 0 auto;
  padding: 5px 6px 5px 5px;
  border: 1px solid #b4b4b4;
  background: #efefef;
}

.sources label {
  margin-left: auto;
  padding: 5px 2px;
}

.sources input {
  width: 144px;
  height: 22px;
  margin: 2px 8px 0 0;
}

.actions {
  display: flex;
  justify-content: center;
  gap: 8px;
  margin-top: 4px;
  padding: 13px 0 11px;
  border-top: 1px solid #999;
}

.btn {
  height: 27px;
  padding: 1px 6px 0;
  border: 1px solid #4f5d6c;
  border-radius: 4px;
  background: #fff;
  color: #4f5d6c;
  font-size: 13px;
  font-weight: bold;
}

.sources .btn {
  padding: 1px 2px 0;
}

.btn.primary {
  background: #4f5d6c;
  color: #fff;
}

.count {
  display: flex;
  align-items: center;
  justify-content: flex-end;
  gap: 2px;
  height: 22px;
  margin-bottom: 8px;
}

.count label {
  padding-top: 1px;
}

.spinner {
  position: relative;
  width: 66px;
}

.spinner input {
  width: 100%;
  height: 22px;
}

.arrows {
  position: absolute;
  right: 3px;
  top: 3px;
  display: flex;
  flex-direction: column;
  gap: 6px;
}

.list {
  display: flex;
  align-items: flex-start;
  flex: 1;
  padding: 4px 13px 4px 32px;
  border: 1px solid #b4b4b4;
  background: #efefef;
}

.list label {
  padding: 3px 3px 0 0;
}

.list input {
  flex: 1;
  height: 27px;
}

.list .caret {
  margin: 11px 0 0 10px;
}

.resize {
  position: absolute;
  right: 0;
  bottom: 0;
  width: 13px;
  height: 13px;
}
```
